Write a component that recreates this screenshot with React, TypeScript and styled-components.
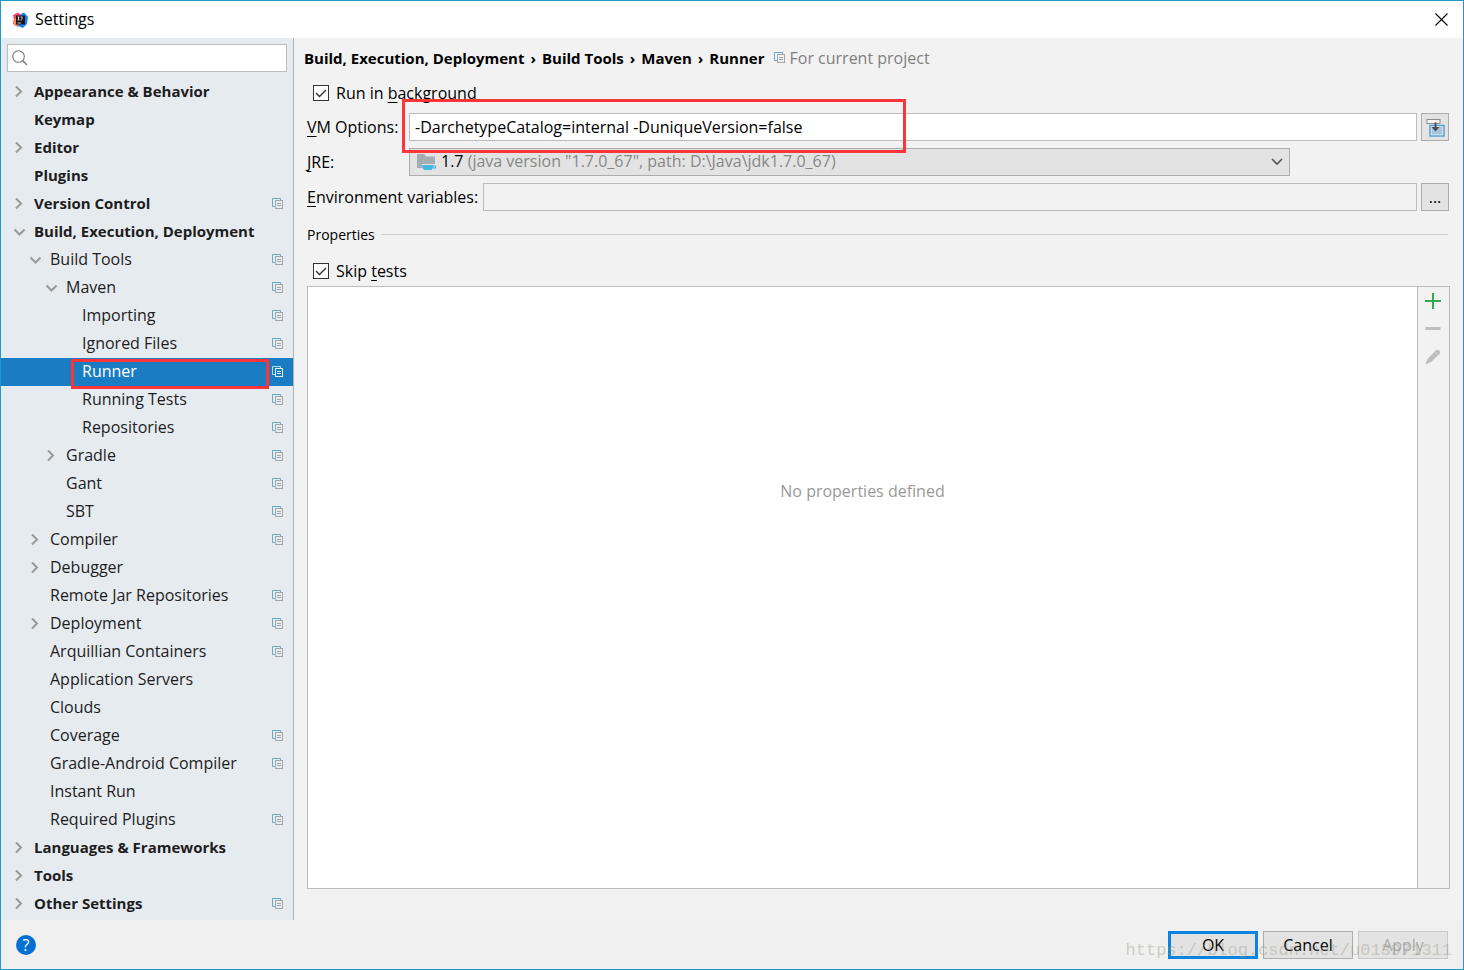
import React from 'react';
import styled, { createGlobalStyle, css } from 'styled-components';

const Global = createGlobalStyle`
  *, *::before, *::after { box-sizing: border-box; }
  body { margin: 0; background: #f2f2f2; }
  body, button, input, select {
    font-family: "Open Sans", "Noto Sans", sans-serif;
    font-size: 16px;
    line-height: 20px;
    color: #000;
  }
  button { cursor: pointer; }
  u { text-underline-offset: 3px; text-decoration-thickness: 1px; }
`;

const Window = styled.div`
  display: flex;
  flex-direction: column;
  min-height: 100vh;
  border: 1px solid #2199cc;
  background: #f2f2f2;
`;

const TitleBar = styled.header`
  display: flex;
  align-items: center;
  gap: 7px;
  height: 37px;
  padding: 0 15px 0 11px;
  background: #fff;
`;

const Title = styled.h1`
  flex: 1;
  margin: 0;
  padding-bottom: 2px;
  font-size: 16px;
  font-weight: 400;
`;

const IconButton = styled.button`
  display: flex;
  align-items: center;
  justify-content: center;
  padding: 0;
  border: 0;
  background: none;
`;

const Body = styled.div`
  display: flex;
  flex: 1;
`;

const Sidebar = styled.aside`
  flex: 0 0 293px;
  border-right: 1px solid #b0b3b6;
  background: #e6ebf0;
`;

const SearchBox = styled.label`
  display: flex;
  align-items: center;
  height: 28px;
  margin: 6px 6px 6px;
  padding: 0 4px;
  border: 1px solid #b9bdc0;
  background: #fff;
`;

const SearchInput = styled.input`
  flex: 1;
  min-width: 0;
  margin-left: 4px;
  padding: 0;
  border: 0;
  outline: 0;
  background: transparent;
`;

const Tree = styled.ul`
  margin: 0;
  padding: 0;
  list-style: none;
`;

const TreeItem = styled.li`
  position: relative;
`;

const TreeRow = styled.button<{ $level: number; $selected?: boolean }>`
  display: flex;
  align-items: center;
  gap: 8px;
  width: 100%;
  height: 28px;
  padding: 0 9px 0 ${(p) => 11 + p.$level * 16}px;
  border: 0;
  background: ${(p) => (p.$selected ? '#1a7dc4' : 'transparent')};
  color: ${(p) => (p.$selected ? '#fff' : '#1d1d1d')};
  font-size: ${(p) => (p.$level === 0 ? 15 : 16)}px;
  font-weight: ${(p) => (p.$level === 0 ? 700 : 400)};
  text-align: left;
`;

const ArrowSlot = styled.span`
  display: flex;
  flex: 0 0 14px;
  justify-content: center;
`;

const TreeLabel = styled.span`
  flex: 1;
  padding-bottom: 2px;
  white-space: nowrap;
`;

const Highlight = styled.span<{ $area: 'row' | 'field' }>`
  position: absolute;
  border: 3px solid #fb3538;
  pointer-events: none;
  ${(p) =>
    p.$area === 'row'
      ? css`inset: 1px 24px -3px 70px;`
      : css`top: -14px; left: -7px; width: 504px; height: 54px; z-index: 2;`}
`;

const Main = styled.main`
  display: flex;
  flex: 1;
  flex-direction: column;
  min-width: 0;
  padding: 10px 13px 31px;
`;

const Breadcrumb = styled.nav`
  display: flex;
  align-items: center;
  gap: 6px;
  height: 20px;
  margin: 0 0 14px -3px;
  font-size: 15px;
  font-weight: 700;
  white-space: nowrap;
`;

const Scope = styled.span`
  display: flex;
  align-items: center;
  gap: 4px;
  margin-left: 3px;
  color: #808080;
  font-size: 16px;
  font-weight: 400;
`;

const CheckLabel = styled.label`
  display: flex;
  align-items: center;
  gap: 7px;
  height: 22px;
  padding-left: 6px;
`;

const Checkbox = styled.input`
  appearance: none;
  width: 16px;
  height: 16px;
  margin: 0;
  border: 1px solid #333;
  background: #fff;
  &:checked {
    background: #fff
      url("data:image/svg+xml,%3Csvg xmlns='http://www.w3.org/2000/svg' viewBox='0 0 14 14'%3E%3Cpath d='M2 7l3.5 3.5L12 4' fill='none' stroke='%23333' stroke-width='1.4'/%3E%3C/svg%3E")
      center / 14px 14px no-repeat;
  }
`;

const Form = styled.div`
  display: flex;
  flex-direction: column;
  gap: 7px;
  margin: 9px 1px 14px 0;
`;

const FieldRow = styled.div`
  display: flex;
  align-items: center;
  height: 28px;
`;

const FieldLabel = styled.label`
  min-width: 97px;
  margin-right: 5px;
  white-space: nowrap;
`;

const FieldWrap = styled.div`
  position: relative;
  display: flex;
  flex: 1;
`;

const TextField = styled.input<{ $muted?: boolean }>`
  flex: 1;
  min-width: 0;
  height: 28px;
  padding: 0 5px;
  border: 1px solid #bcbcbc;
  background: ${(p) => (p.$muted ? '#f2f2f2' : '#fff')};
  outline: 0;
`;

const SquareButton = styled(IconButton)`
  flex: 0 0 28px;
  height: 28px;
  margin-left: 4px;
  border: 1px solid #adadad;
  background: #e3e3e3;
`;

const Combo = styled.div`
  position: relative;
  display: flex;
  flex: 1;
  align-items: center;
  height: 28px;
  margin-right: 159px;
  padding: 0 6px 0 7px;
  border: 1px solid #adadad;
  background: #e3e3e3;
`;

const ComboText = styled.span`
  flex: 1;
  margin-left: 4px;
  padding-bottom: 2px;
  color: #888;
  font-size: 16px;
  white-space: nowrap;
`;

const ComboVersion = styled.span`
  color: #000;
`;

const ComboSelect = styled.select`
  position: absolute;
  inset: 0;
  width: 100%;
  opacity: 0;
`;

const SectionTitle = styled.h2`
  display: flex;
  align-items: center;
  gap: 6px;
  height: 20px;
  margin: 0 2px 15px 0;
  font-size: 14px;
  font-weight: 400;
  &::after {
    content: '';
    flex: 1;
    height: 1px;
    margin-bottom: 2px;
    background: #cdcdcd;
  }
`;

const Panel = styled.section`
  display: flex;
  flex: 1;
  margin-top: 4px;
  border: 1px solid #bcbcbc;
`;

const EmptyTable = styled.div`
  display: flex;
  flex: 1;
  justify-content: center;
  padding-top: 194px;
  background: #fff;
  color: #999;
`;

const PanelTools = styled.div`
  display: flex;
  flex: 0 0 32px;
  flex-direction: column;
  border-left: 1px solid #bcbcbc;
`;

const ToolButton = styled(IconButton)`
  width: 30px;
  height: 28px;
`;

const Footer = styled.footer`
  position: relative;
  display: flex;
  align-items: center;
  gap: 5px;
  height: 49px;
  padding: 0 15px;
  background: #f0f0f0;
`;

const HelpButton = styled.button`
  width: 20px;
  height: 20px;
  margin-right: auto;
  padding: 0;
  border: 0;
  border-radius: 50%;
  background: #0570d4;
  color: #fff;
`;

const DialogButton = styled.button<{ $primary?: boolean }>`
  width: 90px;
  height: 28px;
  padding: 0;
  border: ${(p) => (p.$primary ? '3px solid #0a84e0' : '1px solid #adadad')};
  background: #e2e2e2;
  &:disabled {
    border-color: #c8c8c8;
    background: #e3e3e3;
    color: #aaa;
  }
`;

const Watermark = styled.span`
  position: absolute;
  right: 11px;
  bottom: 8px;
  color: rgba(150, 150, 130, 0.4);
  font-family: "Liberation Mono", monospace;
  font-size: 17px;
  pointer-events: none;
`;

const LogoIcon = () => (
  <svg width="16" height="16" viewBox="0 0 16 16" aria-hidden="true">
    <path d="M1 3L6 0.500L9 3L6 15L1 12L2 8Z" fill="#f9436b" />
    <path d="M0.500 9L4 6L6 14L3 13.500Z" fill="#f98a5c" />
    <path d="M9 2L12 .5L16 5L15 12L11 16L6 14Z" fill="#1483f2" />
    <rect x="4" y="3.500" width="9" height="9" fill="#1a1216" />
    <path d="M5.500 5h2M6.500 5v3M5.500 8h2M8.500 5h2M10 5v2.500l-.6.5H8.500M5.500 11h3.500" stroke="#ddd" strokeWidth=".9" fill="none" />
  </svg>
);

const CloseIcon = () => (
  <svg width="13" height="13" viewBox="0 0 13 13" aria-hidden="true">
    <path d="M.5 .5L12.500 12.500M12.500 .5L.5 12.500" stroke="#000" strokeWidth="1.100" />
  </svg>
);

const SearchIcon = () => (
  <svg width="16" height="16" viewBox="0 0 16 16" aria-hidden="true">
    <circle cx="6.500" cy="6.500" r="5.800" fill="none" stroke="#777" strokeWidth="1.100" />
    <path d="M10.600 10.600L15 15" stroke="#777" strokeWidth="1.400" />
  </svg>
);

const Chevron = ({ open }: { open?: boolean }) =>
  open ? (
    <svg width="12" height="8" viewBox="0 0 12 8" aria-hidden="true">
      <path d="M1.500 1.500L6.500 6.500L11.500 1.500" fill="none" stroke="#999" strokeWidth="2" />
    </svg>
  ) : (
    <svg width="8" height="12" viewBox="0 0 8 12" aria-hidden="true">
      <path d="M1 .5L6 5.500L1 10.500" fill="none" stroke="#999" strokeWidth="2" />
    </svg>
  );

const CopyIcon = ({ light }: { light?: boolean }) => (
  <svg width="12" height="12" viewBox="0 0 12 12" aria-hidden="true">
    <path d="M3 8.500H.5V.5H8.500V2" fill="none" stroke={light ? '#b8dcf5' : '#68a9d0'} />
    <rect x="3.500" y="2.500" width="7" height="8" fill="none" stroke={light ? '#e4eef6' : '#a6a6a6'} />
    <path d="M5 5.500H9M5 7.500H9" stroke={light ? '#e4eef6' : '#a6a6a6'} />
  </svg>
);

const JdkIcon = () => (
  <svg width="20" height="18" viewBox="0 0 20 18" aria-hidden="true">
    <path d="M0 1H7L9 3.500H18V11H5V15H0Z" fill="#a3adb5" />
    <path d="M5 12H16V12.500H19V15.500H15.500L14.500 17H7Q5 15.500 5 12ZM16.500 13.500V14.500H18V13.500Z" fill="#45b8e2" fillRule="evenodd" />
  </svg>
);

const ComboArrow = () => (
  <svg width="12" height="8" viewBox="0 0 12 8" aria-hidden="true">
    <path d="M1 1L6 6L11 1" fill="none" stroke="#555" strokeWidth="1.600" />
  </svg>
);

const InsertMacroIcon = () => (
  <svg width="19" height="19" viewBox="0 0 19 19" aria-hidden="true">
    <rect x="1" y="1.500" width="13" height="4" fill="#f4f4f4" stroke="#8c8c8c" />
    <rect x="4" y="7.500" width="14" height="10.500" fill="#a9c6da" stroke="#4a9fd0" strokeWidth="1.400" />
    <rect x="5.200" y="8.700" width="11.600" height="8.100" fill="none" stroke="#dceaf3" strokeWidth=".8" />
    <path d="M9.500 4.500V10" stroke="#4d4d4d" strokeWidth="1.800" />
    <path d="M5.500 9H13.500L9.500 13.500Z" fill="#4d4d4d" />
  </svg>
);

const PlusIcon = () => (
  <svg width="16" height="16" viewBox="0 0 16 16" aria-hidden="true">
    <path d="M8 0V16M0 8H16" stroke="#35a853" strokeWidth="2" />
  </svg>
);

const MinusIcon = () => (
  <svg width="16" height="16" viewBox="0 0 16 16" aria-hidden="true">
    <path d="M.5 7.500H15.500" stroke="#bfbfbf" strokeWidth="3" />
  </svg>
);

const PencilIcon = () => (
  <svg width="16" height="16" viewBox="0 0 16 16" aria-hidden="true">
    <path d="M.5 15.500L2.500 10L10.500 1.800Q12.500 0 14.300 1.500Q16 3.300 14.300 5.300L6 13Z" fill="#bdbdbd" />
    <path d="M9.700 2.600L13.500 6.200" stroke="#d6d6d6" strokeWidth=".7" />
  </svg>
);

type Node = { label: string; level: number; state?: 'open' | 'closed'; copy?: boolean };

const nodes: Node[] = [
  { label: 'Appearance & Behavior', level: 0, state: 'closed' },
  { label: 'Keymap', level: 0 },
  { label: 'Editor', level: 0, state: 'closed' },
  { label: 'Plugins', level: 0 },
  { label: 'Version Control', level: 0, state: 'closed', copy: true },
  { label: 'Build, Execution, Deployment', level: 0, state: 'open' },
  { label: 'Build Tools', level: 1, state: 'open', copy: true },
  { label: 'Maven', level: 2, state: 'open', copy: true },
  { label: 'Importing', level: 3, copy: true },
  { label: 'Ignored Files', level: 3, copy: true },
  { label: 'Runner', level: 3, copy: true },
  { label: 'Running Tests', level: 3, copy: true },
  { label: 'Repositories', level: 3, copy: true },
  { label: 'Gradle', level: 2, state: 'closed', copy: true },
  { label: 'Gant', level: 2, copy: true },
  { label: 'SBT', level: 2, copy: true },
  { label: 'Compiler', level: 1, state: 'closed', copy: true },
  { label: 'Debugger', level: 1, state: 'closed' },
  { label: 'Remote Jar Repositories', level: 1, copy: true },
  { label: 'Deployment', level: 1, state: 'closed', copy: true },
  { label: 'Arquillian Containers', level: 1, copy: true },
  { label: 'Application Servers', level: 1 },
  { label: 'Clouds', level: 1 },
  { label: 'Coverage', level: 1, copy: true },
  { label: 'Gradle-Android Compiler', level: 1, copy: true },
  { label: 'Instant Run', level: 1 },
  { label: 'Required Plugins', level: 1, copy: true },
  { label: 'Languages & Frameworks', level: 0, state: 'closed' },
  { label: 'Tools', level: 0, state: 'closed' },
  { label: 'Other Settings', level: 0, state: 'closed', copy: true },
];

const SettingsTree = () => (
  <Tree>
    {nodes.map((n) => {
      const selected = n.label === 'Runner';
      return (
        <TreeItem key={n.label}>
          <TreeRow type="button" $level={n.level} $selected={selected}>
            <ArrowSlot>{n.state && <Chevron open={n.state === 'open'} />}</ArrowSlot>
            <TreeLabel>{n.label}</TreeLabel>
            {n.copy && <CopyIcon light={selected} />}
          </TreeRow>
          {selected && <Highlight $area="row" />}
        </TreeItem>
      );
    })}
  </Tree>
);

const crumbs = ['Build, Execution, Deployment', 'Build Tools', 'Maven', 'Runner'];

export default function App() {
  return (
    <>
      <Global />
      <Window>
        <TitleBar>
          <LogoIcon />
          <Title>Settings</Title>
          <IconButton type="button" aria-label="Close"><CloseIcon /></IconButton>
        </TitleBar>
        <Body>
          <Sidebar>
            <SearchBox>
              <SearchIcon />
              <SearchInput type="text" aria-label="Search settings" />
            </SearchBox>
            <SettingsTree />
          </Sidebar>
          <Main>
            <Breadcrumb>
              {crumbs.map((crumb, i) => (
                <React.Fragment key={crumb}>
                  {i > 0 && <span>›</span>}
                  <span>{crumb}</span>
                </React.Fragment>
              ))}
              <Scope><CopyIcon />For current project</Scope>
            </Breadcrumb>
            <CheckLabel>
              <Checkbox type="checkbox" defaultChecked />
              <span>Run in <u>b</u>ackground</span>
            </CheckLabel>
            <Form>
              <FieldRow>
                <FieldLabel htmlFor="vm"><u>V</u>M Options:</FieldLabel>
                <FieldWrap>
                  <TextField id="vm" type="text" defaultValue="-DarchetypeCatalog=internal -DuniqueVersion=false" />
                  <Highlight $area="field" />
                </FieldWrap>
                <SquareButton type="button" aria-label="Insert macro"><InsertMacroIcon /></SquareButton>
              </FieldRow>
              <FieldRow>
                <FieldLabel htmlFor="jre"><u>J</u>RE:</FieldLabel>
                <Combo>
                  <JdkIcon />
                  <ComboText>
                    <ComboVersion>1.7</ComboVersion> (java version "1.7.0_67", path: D:\Java\jdk1.7.0_67)
                  </ComboText>
                  <ComboArrow />
                  <ComboSelect id="jre" defaultValue="1.7">
                    <option value="1.7">1.7</option>
                  </ComboSelect>
                </Combo>
              </FieldRow>
              <FieldRow>
                <FieldLabel htmlFor="env"><u>E</u>nvironment variables:</FieldLabel>
                <TextField id="env" type="text" $muted />
                <SquareButton type="button" aria-label="Edit environment variables">...</SquareButton>
              </FieldRow>
            </Form>
            <SectionTitle>Properties</SectionTitle>
            <CheckLabel>
              <Checkbox type="checkbox" defaultChecked />
              <span>Skip <u>t</u>ests</span>
            </CheckLabel>
            <Panel>
              <EmptyTable>No properties defined</EmptyTable>
              <PanelTools>
                <ToolButton type="button" aria-label="Add"><PlusIcon /></ToolButton>
                <ToolButton type="button" aria-label="Remove"><MinusIcon /></ToolButton>
                <ToolButton type="button" aria-label="Edit"><PencilIcon /></ToolButton>
              </PanelTools>
            </Panel>
          </Main>
        </Body>
        <Footer>
          <HelpButton type="button" aria-label="Help">?</HelpButton>
          <DialogButton type="button" $primary>OK</DialogButton>
          <DialogButton type="button">Cancel</DialogButton>
          <DialogButton type="button" disabled>Apply</DialogButton>
          <Watermark>https://blog.csdn.net/u013971311</Watermark>
        </Footer>
      </Window>
    </>
  );
}
